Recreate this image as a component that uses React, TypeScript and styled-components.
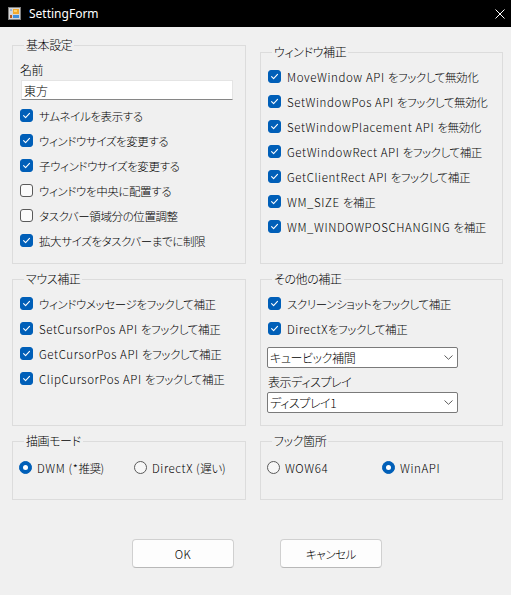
import React from "react";
import styled, { createGlobalStyle } from "styled-components";

const GlobalStyle = createGlobalStyle`
  html, body { margin: 0; padding: 0; background: #f0f0f0; }
  body {
    font-family: "Noto Sans CJK JP", "Noto Sans", sans-serif;
    font-size: 11.5px;
    font-weight: 300;
    letter-spacing: -0.4px;
    color: #000;
    font-feature-settings: "palt";
  }
  * { box-sizing: border-box; }
`;

const Window = styled.div`
  width: 511px;
  height: 595px;
  background: #f0f0f0;
  display: flex;
  flex-direction: column;
  overflow: hidden;
`;

const TitleBar = styled.div`
  height: 27px;
  background: #000;
  display: flex;
  align-items: center;
  padding: 0 6px 0 8px;
  gap: 8px;
  flex-shrink: 0;
`;

const Title = styled.span`
  color: #fff;
  font-family: "Noto Sans", "Liberation Sans", sans-serif;
  font-size: 12px;
  font-weight: 400;
  letter-spacing: 0;
  line-height: 16px;
`;

const CloseGlyph = styled.svg`
  margin-left: auto;
  display: block;
`;

const Content = styled.div`
  display: grid;
  grid-template-columns: 234px 243px;
  grid-template-rows: 227px 155px 67px;
  column-gap: 14px;
  row-gap: 7px;
  padding: 10px 0 0 12px;
`;

const Group = styled.fieldset<{ $pt: number; $h?: number }>`
  margin: 0;
  border: 1px solid #dcdcdc;
  padding: ${(p) => p.$pt}px 6px 0 6px;
  min-width: 0;
  ${(p) => (p.$h ? `height: ${p.$h}px; align-self: end;` : "height: 100%;")}
  display: flex;
  flex-direction: column;
`;

const Legend = styled.legend`
  font-size: 12px;
  line-height: 16px;
  padding: 0 2px;
  margin-left: 5px;
`;

const FieldLabel = styled.div<{ $mt: number }>`
  font-size: 12px;
  line-height: 16px;
  margin-top: ${(p) => p.$mt}px;
  padding-left: 1px;
`;

const Latin = styled.span`
  letter-spacing: 0.6px;
`;

const TextInput = styled.input`
  width: 212px;
  height: 20px;
  margin: 2px 0 3px 2px;
  border: 1px solid #e4e4e4;
  border-bottom: 1px solid #868686;
  background: #fff;
  padding: 0 2px;
  font-family: inherit;
  font-size: 12px;
  font-weight: 300;
  color: #000;
  outline: none;
  font-feature-settings: "palt";
`;

const CheckRow = styled.label`
  height: 25px;
  display: flex;
  align-items: center;
  gap: 6px;
  padding-left: 1px;
  white-space: pre;
`;

const Box = styled.span<{ $on: boolean }>`
  width: 13px;
  height: 13px;
  border-radius: 3px;
  flex-shrink: 0;
  display: flex;
  align-items: center;
  justify-content: center;
  background: ${(p) => (p.$on ? "#005fb8" : "#fbfbfb")};
  border: 1px solid ${(p) => (p.$on ? "#005fb8" : "#5a5a5a")};
`;

const RadioRow = styled.div`
  display: grid;
  grid-template-columns: 115px 115px;
  height: 25px;
  align-items: center;
`;

const RadioItem = styled.label`
  display: flex;
  align-items: center;
  gap: 5px;
  white-space: pre;
`;

const RadioDot = styled.span<{ $on: boolean }>`
  width: 13px;
  height: 13px;
  border-radius: 50%;
  flex-shrink: 0;
  display: flex;
  align-items: center;
  justify-content: center;
  background: ${(p) => (p.$on ? "#005fb8" : "#f7f7f7")};
  border: 1px solid ${(p) => (p.$on ? "#005fb8" : "#5a5a5a")};
  &::after {
    content: "";
    display: ${(p) => (p.$on ? "block" : "none")};
    width: 5px;
    height: 5px;
    border-radius: 50%;
    background: #fff;
  }
`;

const Combo = styled.div<{ $mt: number }>`
  width: 191px;
  height: 21px;
  margin: ${(p) => p.$mt}px 0 0 0;
  border: 1px solid #7a7a7a;
  border-radius: 2px;
  background: #fff;
  display: flex;
  align-items: center;
  justify-content: space-between;
  padding: 0 4px 0 2px;
  font-size: 12px;
  line-height: 16px;
`;

const ButtonBar = styled.div`
  display: flex;
  justify-content: center;
  gap: 46px;
  margin-top: 39px;
  padding-left: 3px;
`;

const Button = styled.button`
  width: 102px;
  height: 29px;
  background: #fdfdfd;
  border: 1px solid #d0d0d0;
  border-bottom-color: #b8b8b8;
  border-radius: 4px;
  font-family: inherit;
  font-size: 11.5px;
  font-weight: 300;
  letter-spacing: -0.4px;
  color: #000;
  padding: 0;
  font-feature-settings: "palt";
`;

const Txt = ({ children }: { children: string }) => (
  <span>
    {children
      .split(/([\x00-\x7F]+)/)
      .filter(Boolean)
      .map((s, i) => (/^[\x00-\x7F]+$/.test(s) ? <Latin key={i}>{s}</Latin> : <span key={i}>{s}</span>))}
  </span>
);

const Check = ({ on, children }: { on: boolean; children: string }) => (
  <CheckRow>
    <Box $on={on}>
      {on && (
        <svg width="9" height="9" viewBox="0 0 9 9">
          <path d="M1.6 4.7 L3.6 6.6 L7.5 2.4" stroke="#fff" strokeWidth="1.1" fill="none" strokeLinecap="round" strokeLinejoin="round" />
        </svg>
      )}
    </Box>
    <Txt>{children}</Txt>
  </CheckRow>
);

const Radio = ({ on, children }: { on: boolean; children: string }) => (
  <RadioItem>
    <RadioDot $on={on} />
    <Txt>{children}</Txt>
  </RadioItem>
);

const Chevron = () => (
  <svg width="9" height="5" viewBox="0 0 9 5">
    <path d="M0.5 0.5 L4.5 4.3 L8.5 0.5" stroke="#5c5c5c" strokeWidth="1" fill="none" />
  </svg>
);

const AppIcon = () => (
  <svg width="13" height="13" viewBox="0 0 13 13">
    <rect x="0.5" y="0.5" width="12" height="12" fill="#d6d6d6" stroke="#808080" />
    <rect x="2" y="2" width="2" height="2" fill="#8fb4dc" />
    <rect x="2" y="5" width="2" height="2" fill="#c8d8ea" />
    <rect x="5" y="2" width="6" height="5" fill="#f2a92e" />
    <rect x="6" y="3" width="3" height="2" fill="#ffd36a" />
    <rect x="2" y="8" width="2" height="3" fill="#b25a1e" />
    <rect x="5" y="8" width="6" height="3" fill="#3f8fdc" />
  </svg>
);

export default function App() {
  return (
    <>
      <GlobalStyle />
      <Window>
        <TitleBar>
          <AppIcon />
          <Title>SettingForm</Title>
          <CloseGlyph width="10" height="10" viewBox="0 0 10 10">
            <path d="M0.5 0.5 L9.5 9.5 M9.5 0.5 L0.5 9.5" stroke="#fff" strokeWidth="1" />
          </CloseGlyph>
        </TitleBar>

        <Content>
          <Group $pt={0}>
            <Legend>基本設定</Legend>
            <FieldLabel $mt={9}>名前</FieldLabel>
            <TextInput value="東方" readOnly />
            <Check on>サムネイルを表示する</Check>
            <Check on>ウィンドウサイズを変更する</Check>
            <Check on>子ウィンドウサイズを変更する</Check>
            <Check on={false}>ウィンドウを中央に配置する</Check>
            <Check on={false}>タスクバー領域分の位置調整</Check>
            <Check on>拡大サイズをタスクバーまでに制限</Check>
          </Group>

          <Group $pt={4} $h={220}>
            <Legend>ウィンドウ補正</Legend>
            <Check on>MoveWindow API をフックして無効化</Check>
            <Check on>SetWindowPos API をフックして無効化</Check>
            <Check on>SetWindowPlacement API を無効化</Check>
            <Check on>GetWindowRect API をフックして補正</Check>
            <Check on>GetClientRect API をフックして補正</Check>
            <Check on>WM_SIZE を補正</Check>
            <Check on>WM_WINDOWPOSCHANGING を補正</Check>
          </Group>

          <Group $pt={4}>
            <Legend>マウス補正</Legend>
            <Check on>ウィンドウメッセージをフックして補正</Check>
            <Check on>SetCursorPos API をフックして補正</Check>
            <Check on>GetCursorPos API をフックして補正</Check>
            <Check on>ClipCursorPos API をフックして補正</Check>
          </Group>

          <Group $pt={4}>
            <Legend>その他の補正</Legend>
            <Check on>スクリーンショットをフックして補正</Check>
            <Check on>DirectXをフックして補正</Check>
            <Combo $mt={6}>
              <span>キュービック補間</span>
              <Chevron />
            </Combo>
            <FieldLabel $mt={6}>表示ディスプレイ</FieldLabel>
            <Combo $mt={2}>
              <Txt>ディスプレイ1</Txt>
              <Chevron />
            </Combo>
          </Group>

          <Group $pt={6}>
            <Legend>描画モード</Legend>
            <RadioRow>
              <Radio on>DWM (*推奨)</Radio>
              <Radio on={false}>DirectX (遅い)</Radio>
            </RadioRow>
          </Group>

          <Group $pt={6}>
            <Legend>フック箇所</Legend>
            <RadioRow>
              <Radio on={false}>WOW64</Radio>
              <Radio on>WinAPI</Radio>
            </RadioRow>
          </Group>
        </Content>

        <ButtonBar>
          <Button>
            <Latin>OK</Latin>
          </Button>
          <Button>キャンセル</Button>
        </ButtonBar>
      </Window>
    </>
  );
}
